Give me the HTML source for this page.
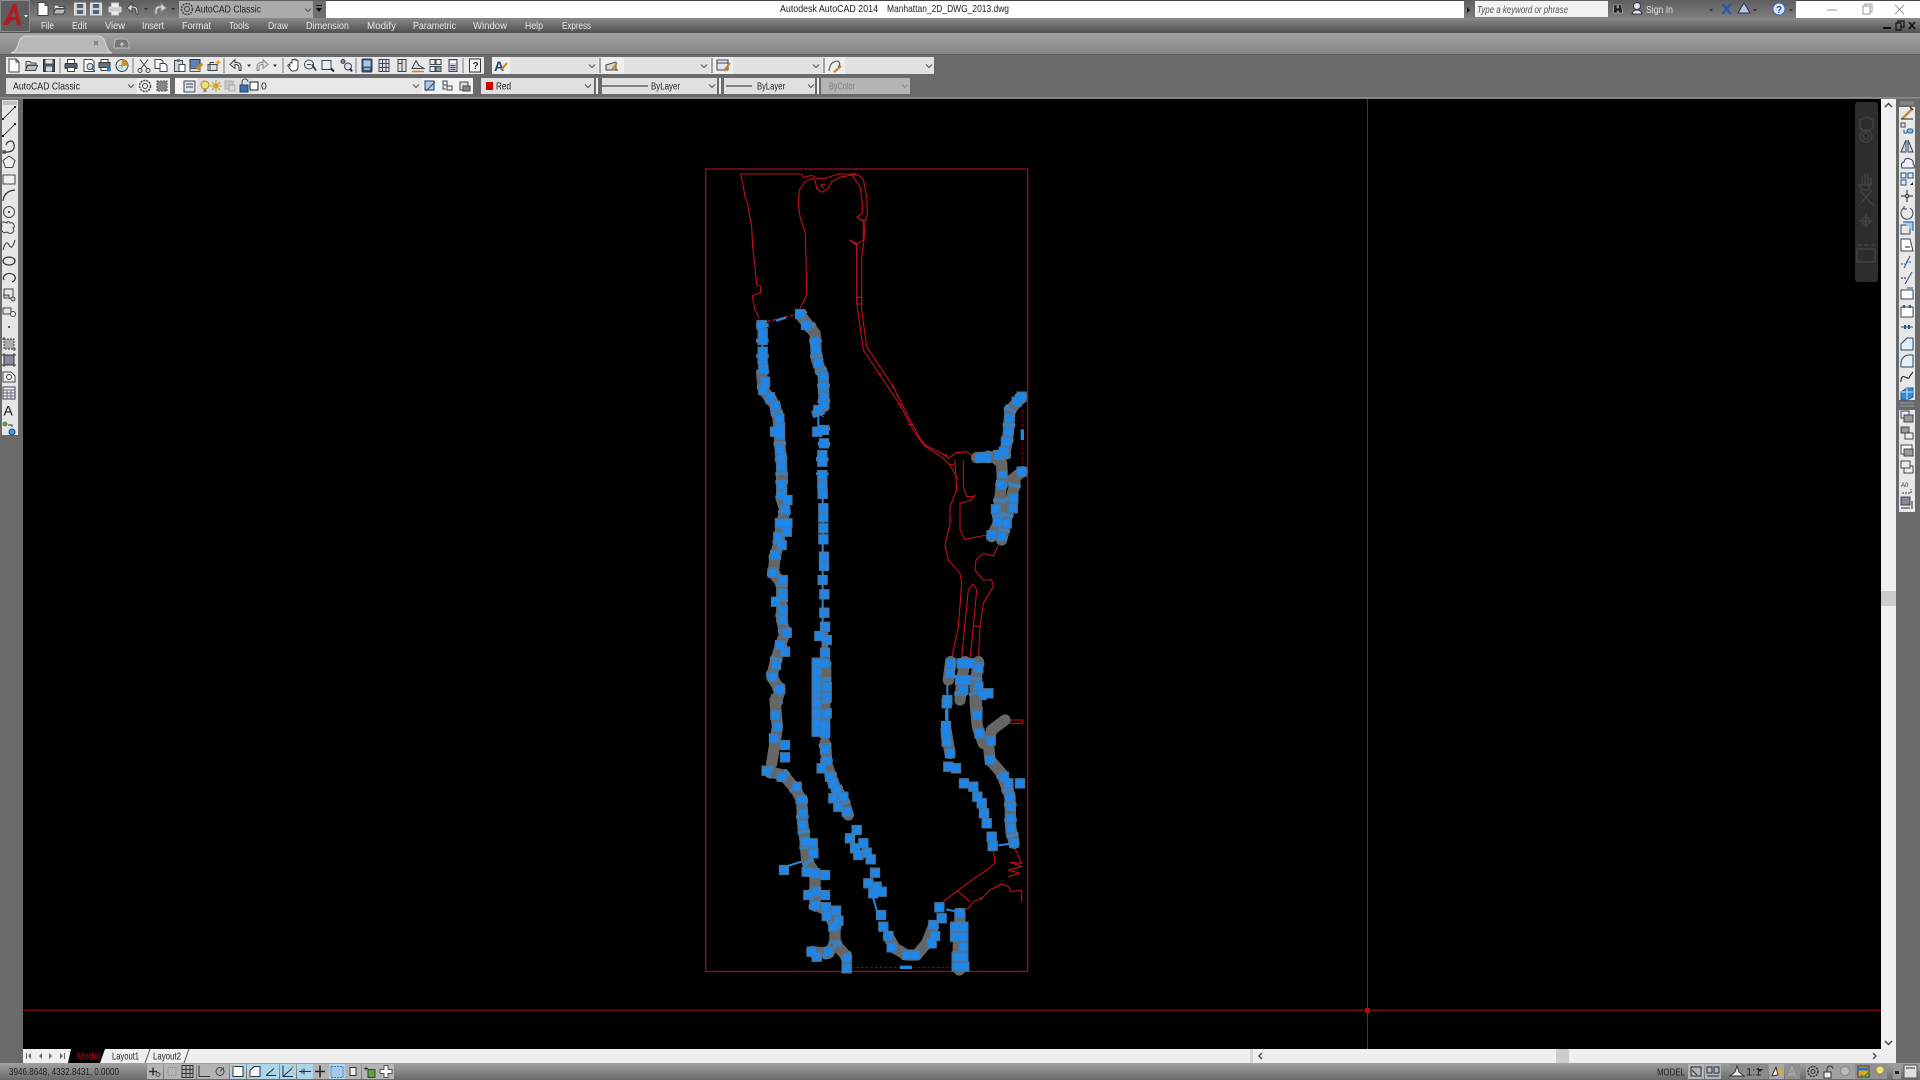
<!DOCTYPE html>
<html><head><meta charset="utf-8"><title>Autodesk AutoCAD 2014</title>
<style>
html,body{margin:0;padding:0;background:#000;width:1920px;height:1080px;overflow:hidden}
svg{display:block}
text{font-family:"Liberation Sans",sans-serif;font-size:10.5px}
.mn{fill:#e6e6e6}
.dk{fill:#222}
.g{fill:none;stroke:#666;stroke-width:34;stroke-linejoin:round;stroke-linecap:round}
.gw{fill:none;stroke:#666;stroke-width:52;stroke-linejoin:round}
.m{fill:none;stroke:#3f7fb8;stroke-width:38;stroke-dasharray:12 34}
.s{fill:none;stroke:#1e86e8;stroke-width:23;stroke-linecap:square}
.h{fill:none;stroke:#4a759c;stroke-width:31;stroke-linecap:square}
.t{fill:none;stroke:#2a86d8;stroke-width:6}
.r{fill:none;stroke:#c8101a;stroke-width:3.2;stroke-linejoin:round}
.ic{fill:none;stroke:#3c4650;stroke-width:1}
.ib{fill:#fff;stroke:#3c4650;stroke-width:1}
</style></head>
<body>
<svg width="1920" height="1080" viewBox="0 0 1920 1080" xmlns="http://www.w3.org/2000/svg">
<defs>
<linearGradient id="gMenu" x1="0" y1="0" x2="0" y2="1"><stop offset="0" stop-color="#8a8a8a"/><stop offset="1" stop-color="#4f4f4f"/></linearGradient>
<linearGradient id="gTab" x1="0" y1="0" x2="0" y2="1"><stop offset="0" stop-color="#a2a2a2"/><stop offset="1" stop-color="#868686"/></linearGradient>
<linearGradient id="gQat" x1="0" y1="0" x2="0" y2="1"><stop offset="0" stop-color="#5e5e5e"/><stop offset="1" stop-color="#7e7e7e"/></linearGradient>
<linearGradient id="gSt" x1="0" y1="0" x2="0" y2="1"><stop offset="0" stop-color="#a0a0a0"/><stop offset="1" stop-color="#6a6a6a"/></linearGradient>

<g id="new"><path class="ib" d="M-5-6.500h7l3 3v10h-10z"/><path class="ic" d="M2-6.500v3h3"/></g>
<g id="open"><path d="M-6-4h4l1 1.500h5v2h-8l-2 5.500z" fill="#ddd" stroke="#3c4650"/><path d="M-4.500 0h10l-2 5h-10z" fill="#bbb" stroke="#3c4650"/></g>
<g id="save"><path d="M-5.500-6h11v12h-11z" fill="#46525e" stroke="#2a3238"/><rect x="-3.500" y="-6" width="7" height="4" fill="#dfe5ea"/><rect x="-3" y="1" width="6" height="5" fill="#cfd6dc"/></g>
<g id="qsave"><path d="M-5.500-6h11v12h-11z" fill="#c9d0d8" stroke="#dfe5ea"/><rect x="-3" y="-5" width="6" height="4" fill="#56606a"/><rect x="-3" y="1" width="6" height="4" fill="#56606a"/></g>
<g id="qprint"><rect x="-3.500" y="-6" width="7" height="4" fill="#eee" stroke="#ccc"/><rect x="-6" y="-2" width="12" height="5" rx="1" fill="#c6ccd2" stroke="#e2e2e2"/><rect x="-3.500" y="2" width="7" height="4" fill="#eee" stroke="#ccc"/></g>
<g id="print"><rect x="-3.500" y="-6" width="7" height="4" fill="#fff" stroke="#3c4650"/><rect x="-6" y="-2" width="12" height="5" rx="1" fill="#56626e" stroke="#333"/><rect x="-3.500" y="2" width="7" height="4" fill="#fff" stroke="#3c4650"/></g>
<g id="prev"><path class="ib" d="M-5-6h8l2 2v10h-10z"/><circle cx="1" cy="1" r="3" fill="#cde" stroke="#3c4650"/><path class="ic" d="M3 3l3 3"/></g>
<g id="pub"><rect x="-4" y="-6" width="7" height="3" fill="#fff" stroke="#3c4650"/><rect x="-6" y="-3" width="11" height="5" fill="#66727e" stroke="#333"/><rect x="-4" y="2" width="7" height="3" fill="#fff" stroke="#3c4650"/><circle cx="4" cy="4" r="2" fill="#2a7ec8"/></g>
<g id="d3"><circle r="6" fill="#dfe7ee" stroke="#3c4650"/><path d="M0-6a6 6 0 0 1 6 6h-6z" fill="#d88a2a"/><path d="M-3 0h6M0-3v6" stroke="#3c7"/></g>
<g id="cut"><path class="ic" d="M-4-6l7 9M4-6l-7 9"/><circle cx="-4" cy="5" r="2" fill="none" stroke="#3c4650"/><circle cx="4" cy="5" r="2" fill="none" stroke="#3c4650"/></g>
<g id="copy"><path class="ib" d="M-6-6h6l2 2v7h-8z"/><path class="ib" d="M-1-2h5l2 2v6h-7z"/></g>
<g id="paste"><rect x="-5.500" y="-5" width="8" height="11" fill="#d2d2d2" stroke="#3c4650"/><rect x="-3" y="-6.500" width="3" height="3" fill="#68747e"/><path class="ib" d="M-1-1h6v7h-6z"/></g>
<g id="match"><rect x="-6" y="-6" width="10" height="9" fill="#5d7fb2" stroke="#333"/><path d="M-6 3h10v3h-10z" fill="#ddd" stroke="#555"/><path d="M6-2l-5 6" stroke="#c8851e" stroke-width="3"/></g>
<g id="blk"><rect x="-6" y="-1" width="9" height="6" fill="#ddd" stroke="#3c4650"/><path class="ic" d="M-4 5v-8h4"/><path d="M4-6l1 2 2 1-2 1-1 2-1-2-2-1 2-1z" fill="#e8a01c"/></g>
<g id="undo"><path d="M-6-1l5-5v3h2a4 4 0 0 1 4 4v4h-2v-3a3 3 0 0 0-3-3h-1v4z" fill="#ddd" stroke="#3c4650"/></g>
<g id="redo"><path d="M6-1l-5-5v3h-2a4 4 0 0 0-4 4v4h2v-3a3 3 0 0 1 3-3h1v4z" fill="#ddd" stroke="#8c8c8c"/></g>
<g id="pan"><path d="M-4 1v-3a1 1 0 0 1 2 0v-3a1 1 0 0 1 2 0v-0.500a1 1 0 0 1 2 0v1a1 1 0 0 1 2 0v6q0 4-4 4h-1q-2 0-3-2l-2-3q-0.500-1.500 1-1.500z" fill="#fff" stroke="#3c4650"/></g>
<g id="zm"><circle cx="-1" cy="-1" r="4.500" fill="#e4eef6" stroke="#3c4650"/><path d="M2-1l4 6" stroke="#3c4650" stroke-width="2"/><path d="M-3-1h4" stroke="#3c4650"/></g>
<g id="zw"><rect x="-6" y="-5" width="9" height="9" fill="#e4eef6" stroke="#3c4650"/><path d="M3 3l3 3" stroke="#222" stroke-width="2"/></g>
<g id="zp"><circle cx="2" cy="1" r="3.500" fill="#dde" stroke="#3c4650"/><circle cx="-3" cy="-4" r="2" fill="#889" stroke="#3c4650"/><path d="M4 3l2 3" stroke="#222" stroke-width="2"/></g>
<g id="props"><rect x="-5" y="-6.500" width="10" height="13" rx="1" fill="#3a5a82" stroke="#28384c"/><rect x="-3.500" y="-5" width="7" height="6" fill="#a8c8e6"/><path d="M-3 3.500h6" stroke="#fff"/></g>
<g id="grid"><rect x="-5" y="-6" width="10" height="12" fill="#dde" stroke="#3c4650"/><path class="ic" d="M-1.500-6v12M2-6v12M-5-2h10M-5 2h10"/></g>
<g id="tool"><rect x="-4" y="-6" width="8" height="12" fill="#ddd" stroke="#3c4650"/><path class="ic" d="M0-6v12M-4-2h4"/></g>
<g id="sheet"><path d="M-6 3l4-8 3 5 5 3h-12z" fill="#dde" stroke="#3c4650"/><path d="M-6 6h12" stroke="#c8851e" stroke-width="1.500"/></g>
<g id="mk"><rect x="-5" y="-6" width="5" height="5" fill="none" stroke="#3c4650"/><rect x="1" y="-6" width="5" height="5" fill="none" stroke="#3c4650"/><rect x="-5" y="1" width="5" height="5" fill="none" stroke="#3c4650"/><rect x="1" y="1" width="5" height="5" fill="#7a9" stroke="#3c4650"/></g>
<g id="calc"><rect x="-4" y="-6" width="8" height="12" fill="#ccd" stroke="#3c4650"/><rect x="-2.500" y="-4.500" width="5" height="2" fill="#fff"/><path class="ic" d="M-2.500 0h5M-2.500 2h5M-2.500 4h5"/></g>
<g id="help"><rect x="-5.500" y="-6.500" width="11" height="13" fill="#f4f4f4" stroke="#333"/><text x="-2.500" y="3.500" style="font-size:10px;font-weight:bold" fill="#333">?</text></g>
<g id="gear"><circle r="5.500" fill="none" stroke="#444" stroke-width="1.500" stroke-dasharray="2 1"/><circle r="2.500" fill="none" stroke="#444"/></g>
<path id="dd" d="M-3-1.500l3 3 3-3" fill="none" stroke="#555" stroke-width="1"/>
<path id="tri" d="M-2-1h4l-2 2.500z" fill="#333"/>

<g id="ln"><path d="M-6 6L6-6" stroke="#444"/><rect x="-7" y="5" width="2" height="2" fill="#222"/><rect x="5" y="-7" width="2" height="2" fill="#222"/></g>
<g id="pl"><path d="M-6 5Q0 0 6-5" stroke="#333" stroke-width="1.200" fill="none" stroke-dasharray="4 1"/><rect x="-1" y="-1" width="2" height="2" fill="#222"/></g>
<g id="poly"><path d="M-6 5C4 6 6 2 5-3S-2-6-3-2" fill="none" stroke="#333" stroke-width="1.200"/><path d="M-6 3v4M-4 3v4" stroke="#222"/></g>
<g id="pgon"><path d="M0-6l6 4.500-2.500 7h-7l-2.500-7z" fill="#eee" stroke="#445"/></g>
<g id="rect"><path d="M-6-4h12v9h-12z" fill="#eee" stroke="#445"/></g>
<g id="arc"><path d="M-6 6Q-5-4 6-5" fill="none" stroke="#333" stroke-width="1.200"/></g>
<g id="cir"><circle r="5.500" fill="none" stroke="#445"/><circle r="1" fill="#222"/></g>
<g id="rev"><path d="M-2-6q2-1 3 1 3-1 4 2 1 2-1 3 2 3-1 5-3 1-5-1-3 2-5-1t0-5q-2-3 1-4 2 0 4 1z" fill="none" stroke="#445"/></g>
<g id="spl"><path d="M-6 5Q-3-6 0 0T6-5" fill="none" stroke="#334"/></g>
<g id="ell"><ellipse rx="6" ry="4" fill="none" stroke="#334" stroke-width="1.200"/></g>
<g id="earc"><path d="M-5 2A6 4.500 0 1 1 3 4" fill="none" stroke="#334" stroke-width="1.200"/></g>
<g id="ins"><rect x="-5" y="-6" width="9" height="9" fill="none" stroke="#445"/><path d="M-6 0h6v4" fill="#bbb" stroke="#445"/><circle cx="4" cy="4" r="2" fill="#ccc" stroke="#445"/></g>
<g id="mk2"><rect x="-6" y="-3" width="8" height="6" fill="none" stroke="#445"/><circle cx="4" cy="3" r="2.500" fill="#eee" stroke="#445"/></g>
<g id="pt"><circle r="1" fill="#333"/></g>
<g id="hat"><rect x="-5" y="-5" width="10" height="10" fill="#aaa" stroke="#445" stroke-dasharray="2 1"/><path d="M-7-5h2M5 5h2M-5-7v2M5 5v2" stroke="#333"/></g>
<g id="grd"><rect x="-5" y="-5" width="10" height="10" fill="#889" stroke="#445"/><path d="M-7-5h14M-7 5h14M-5-7v14M5-7v14" stroke="#333"/></g>
<g id="reg"><path d="M-6-5h8l4 4v6h-12z" fill="#eee" stroke="#445"/><circle cx="0" cy="0" r="2.500" fill="none" stroke="#445"/></g>
<g id="tbl"><rect x="-6" y="-6" width="12" height="12" fill="#eee" stroke="#445"/><path d="M-6-3h12M-6 0h12M-6 3h12M-2-3v9M2-3v9" stroke="#667"/></g>
<g id="aT"><text x="-5.500" y="5.500" style="font-size:14px" fill="#111">A</text></g>
<g id="add"><circle cx="-4" cy="-4" r="2.500" fill="#5a9a3a"/><circle cx="3" cy="4" r="3" fill="#3a9ae0" stroke="#246"/><path d="M-1-3h4v2" fill="none" stroke="#333"/></g>

<g id="r1"><path d="M-5 6L5-4" stroke="#c98a2a" stroke-width="2.500"/><path d="M-6 6h12" stroke="#222"/><path d="M3-6l3 3" stroke="#333" stroke-width="1.500"/></g>
<g id="r2"><rect x="-6" y="-6" width="4" height="4" fill="none" stroke="#445"/><rect x="0" y="0" width="6" height="4" rx="2" fill="#7ec0f0" stroke="#258"/><path d="M-3 1v3h3" stroke="#258" fill="none"/></g>
<g id="r3"><path d="M-1-6L-6 6h5zM1-6L6 6h-5z" fill="#c6dcf0" stroke="#345"/></g>
<g id="r4"><path d="M-5 5q-2-5 2-6 1-5 6-3 4 1 3 5 2 1 1 4z" fill="#eef" stroke="#345"/></g>
<g id="r5"><rect x="-6" y="-6" width="5" height="5" fill="none" stroke="#258"/><rect x="1" y="-6" width="5" height="5" fill="none" stroke="#258"/><rect x="-6" y="1" width="5" height="5" fill="none" stroke="#258"/><path d="M3 6l3-3v3z" fill="#222"/></g>
<g id="r6"><path d="M-6 0h12M0-6v12" stroke="#222"/><circle r="1.500" fill="#fff" stroke="#222"/></g>
<g id="r7"><path d="M-3-4A6 6 0 1 0 3-4" fill="none" stroke="#345"/><path d="M-3-6v3h3" fill="none" stroke="#345"/></g>
<g id="r8"><rect x="-6" y="-3" width="9" height="9" fill="none" stroke="#345"/><path d="M-4-6h10v9" fill="#a8cdf0" stroke="#258"/></g>
<g id="r9"><path d="M-6-6h9l3 12h-12z" fill="#fff" stroke="#345"/><path d="M-2 2h5" stroke="#222"/></g>
<g id="r10"><path d="M-6 2h4M-1 0h6" stroke="#258" stroke-dasharray="2 1"/><path d="M3-6L-3 6" stroke="#258"/></g>
<g id="r11"><path d="M-6 0h6" stroke="#222" stroke-dasharray="2 1"/><path d="M5-6L-2 6" stroke="#258"/></g>
<g id="r12"><path d="M-6-4h12v9h-12z" fill="#fff" stroke="#345"/><path d="M0-6h6" stroke="#258"/></g>
<g id="r13"><path d="M-6-4h12v10h-12z" fill="#fff" stroke="#345"/><path d="M-3-6v3M3-6v3" stroke="#258" stroke-width="2"/></g>
<g id="r14"><path d="M-6 0h12" stroke="#258"/><path d="M-2-2v4M2-2v4" stroke="#258" stroke-width="2"/></g>
<g id="r15"><path d="M-6 6v-6l6-6h6v12z" fill="#e2eef8" stroke="#345"/></g>
<g id="r16"><path d="M-6 6V2a8 8 0 0 1 8-8h4v12z" fill="#e2eef8" stroke="#345"/></g>
<g id="r17"><path d="M-6 5q0-7 4-5t4 1 4-6" fill="none" stroke="#234" stroke-width="1.200"/></g>
<g id="r18"><path d="M-6-1l6-4h6v9l-6 3h-6z" fill="#3a8ad0" stroke="#1a5a9a"/><path d="M0-5v12M-6-1h12" stroke="#cde"/></g>
<g id="r19"><rect x="-6" y="-6" width="8" height="7" fill="#eee" stroke="#445"/><rect x="-3" y="-2" width="9" height="7" fill="#999" stroke="#445"/></g>
<g id="r20"><rect x="-6" y="-6" width="8" height="6" fill="#999" stroke="#445"/><rect x="-2" y="0" width="8" height="6" fill="#eee" stroke="#445"/></g>
<g id="r21"><rect x="-6" y="-5" width="11" height="9" fill="#fff" stroke="#445"/><rect x="-3" y="-1" width="9" height="7" fill="#999" stroke="#445"/></g>
<g id="r22"><rect x="-3" y="-1" width="9" height="7" fill="#eee" stroke="#445"/><rect x="-6" y="-6" width="9" height="7" fill="#eee" stroke="#445"/></g>
<g id="r23"><text x="-6" y="-1" style="font-size:6px" fill="#333">A0</text><path d="M-5 5h9v-4" fill="none" stroke="#333" stroke-dasharray="2 1"/></g>
<g id="r24"><rect x="-6" y="-6" width="9" height="8" fill="#889" stroke="#445"/><path d="M-6 5h9M5-2v8" stroke="#333"/></g>

<path id="sq6" d="M185 495h.1M188 520h.1M188 540h.1M188 575h.1M188 598h.1M190 628h.1M195 665h.1M190 690h.1M210 712h.1M225 738h.1M238 775h.1M240 802h.1M225 815h.1M240 825h.1M240 868h.1M245 895h.1M245 920h.1M248 950h.1M300 462h.1M318 495h.1M345 545h.1M347 570h.1M355 610h.1M370 650h.1M370 680h.1M372 710h.1M372 735h.1M355 750h.1M372 810h.1M352 815h.1M372 850h.1M367 885h.1M367 905h.1M367 945h.1M965 710h.1M950 725h.1M928 775h.1M925 815h.1M918 845h.1M912 875h.1M895 885h.1M860 893h.1M840 893h.1M907 948h.1M965 935h.1"/>
<path id="sq7" d="M245 18h.1M245 45h.1M262 60h.1M255 88h.1M240 130h.1M262 130h.1M260 155h.1M235 170h.1M245 195h.1M225 225h.1M218 278h.1M248 300h.1M248 340h.1M228 365h.1M248 390h.1M248 420h.1M260 458h.1M240 495h.1M255 515h.1M228 555h.1M218 590h.1M240 628h.1M228 658h.1M367 15h.1M368 42h.1M370 85h.1M370 112h.1M370 145h.1M370 178h.1M372 230h.1M372 258h.1M368 300h.1M373 343h.1M373 398h.1M375 440h.1M358 468h.1M380 480h.1M375 518h.1M350 548h.1M375 550h.1M350 575h.1M350 600h.1M350 625h.1M380 620h.1M350 650h.1M380 650h.1M752 550h.1M750 580h.1M742 660h.1M785 550h.1M808 550h.1M835 565h.1M780 600h.1M800 600h.1M790 630h.1M835 620h.1M845 645h.1M865 640h.1M830 675h.1M830 708h.1M903 15h.1M888 88h.1M893 125h.1M875 165h.1M940 55h.1M938 85h.1M920 130h.1M905 170h.1"/>
<path id="sq8" d="M226 45h.1M232 80h.1M222 115h.1M255 135h.1M255 172h.1M200 212h.1M245 230h.1M290 260h.1M305 300h.1M308 338h.1M308 375h.1M338 430h.1M315 425h.1M340 460h.1M252 510h.1M375 525h.1M345 520h.1M320 515h.1M348 575h.1M325 585h.1M375 585h.1M345 615h.1M378 622h.1M408 632h.1M380 648h.1M415 662h.1M400 680h.1M335 755h.1M385 755h.1M350 770h.1M440 775h.1M440 805h.1M350 10h.1M350 40h.1M380 40h.1M350 70h.1M375 75h.1M350 95h.1M375 100h.1M375 148h.1M380 182h.1M365 205h.1M390 230h.1M400 250h.1M410 270h.1M400 295h.1M430 290h.1M415 320h.1M440 335h.1M470 390h.1M450 415h.1M490 430h.1M465 445h.1M500 458h.1M475 465h.1M512 478h.1M525 518h.1M505 550h.1M545 575h.1M520 580h.1M530 560h.1M543 645h.1M550 680h.1M565 708h.1M575 742h.1M620 765h.1M645 765h.1M695 730h.1M705 708h.1M700 675h.1M725 655h.1M718 622h.1M740 10h.1M738 78h.1M738 100h.1M740 125h.1M750 160h.1M768 205h.1M745 200h.1M792 250h.1M820 260h.1M832 290h.1M845 310h.1M852 340h.1M860 370h.1M875 410h.1M878 438h.1M838 100h.1M872 122h.1M870 180h.1M912 230h.1M960 250h.1M925 250h.1M930 290h.1M932 320h.1M932 355h.1M932 385h.1M942 428h.1M780 640h.1M765 680h.1M790 680h.1M765 710h.1M790 710h.1M790 740h.1M770 770h.1M790 770h.1M770 800h.1M793 800h.1M832 45h.1"/>
</defs>

<!-- frame backgrounds -->
<rect width="1920" height="1080" fill="#6a6a6a"/>
<rect width="1920" height="18" fill="#fff"/>
<rect width="1920" height="1" fill="#444"/>
<rect x="30" y="0" width="296" height="18" fill="url(#gQat)"/>
<rect x="1464" y="0" width="332" height="18" fill="url(#gQat)"/>
<rect x="1475" y="1" width="133" height="16" fill="#f2f2f2"/>
<rect x="0" y="18" width="1920" height="15" fill="url(#gMenu)"/>
<rect x="0" y="33" width="1920" height="21" fill="url(#gTab)"/>
<rect x="0" y="54" width="1920" height="1" fill="#5a5a5a"/>
<rect x="0" y="97" width="1920" height="1.500" fill="#8d8d8d"/>

<!-- app button -->
<rect x="0" y="0" width="30" height="32" fill="#5e5e5e"/>
<rect x="0.500" y="0.500" width="29" height="31" fill="none" stroke="#8a8a8a"/>
<path d="M3 25L13 4h3l5 21h-4l-1-5h-4l-4 5z" fill="#b31b20"/>
<path d="M11 17l3-6 2 6z" fill="#5e5e5e"/>
<path d="M24 15h4l-2 2.500z" fill="#eee"/>

<!-- QAT -->
<g transform="translate(0,9)">
<use href="#new" x="43"/><use href="#open" x="60"/><use href="#qsave" x="80"/><use href="#qsave" x="96"/><use href="#qprint" x="115"/><use href="#undo" x="133"/><use href="#tri" x="146" /><use href="#redo" x="160"/><use href="#tri" x="173"/>
</g>
<rect x="179" y="1" width="134" height="17" fill="#ababab"/>
<use href="#gear" x="187" y="9"/>
<text x="195" y="12.500" class="dk" textLength="66" lengthAdjust="spacingAndGlyphs">AutoCAD Classic</text>
<use href="#dd" x="308" y="10"/>
<rect x="314" y="1" width="12" height="17" fill="#6f6f6f"/>
<path d="M316 5h6v1h-6zM316 8h6l-3 4z" fill="#111"/>

<!-- title -->
<text x="780" y="12" fill="#222" textLength="98" lengthAdjust="spacingAndGlyphs">Autodesk AutoCAD 2014</text>
<text x="887" y="12" fill="#222" textLength="122" lengthAdjust="spacingAndGlyphs">Manhattan_2D_DWG_2013.dwg</text>

<!-- info center -->
<path d="M1467 7l3 3-3 3z" fill="#111"/>
<text x="1477" y="13" fill="#555" font-style="italic" textLength="91" lengthAdjust="spacingAndGlyphs">Type a keyword or phrase</text>
<path d="M1614 5a2 2 0 0 1 3 0v3h1.500v-3a2 2 0 0 1 3 0l1 8h-4v-2h-1v2h-4z" fill="#222" stroke="#ddd" stroke-width=".5"/>
<path d="M1637 2.500a3 3 0 0 1 0 7a3 3 0 0 1 0-7zM1632 14q1-4 5-4t5 4z" fill="#e2e8ee" stroke="#334"/>
<text x="1646" y="13" fill="#e0e0e0" textLength="27" lengthAdjust="spacingAndGlyphs">Sign In</text>
<use href="#tri" x="1711" y="10"/>
<path d="M1721 4l4 5-4 5h3l2.500-3 2.500 3h3l-4-5 4-5h-3l-2.500 3-2.500-3z" fill="#2a58b0"/>
<path d="M1744 3l6 10h-12z" fill="#b8c8e8" stroke="#334"/><use href="#tri" x="1755" y="10"/>
<circle cx="1779" cy="9" r="6" fill="#dce8f6" stroke="#3468b0"/><text x="1776" y="13" style="font-size:10px;font-weight:bold" fill="#2050a0">?</text><use href="#tri" x="1791" y="10"/>

<!-- window controls -->
<path d="M1827 10h10" stroke="#999"/>
<path d="M1863 6h7v8h-7zM1865 6V4h7v8h-2" fill="none" stroke="#999"/>
<path d="M1895 5l9 9M1904 5l-9 9" stroke="#999"/>
<path d="M1883 28h8" stroke="#111" stroke-width="2"/>
<path d="M1896 23h5v7h-5zM1898 23v-2h6v6h-3" fill="none" stroke="#111" stroke-width="1.200"/>
<path d="M1909 22l6 7M1915 22l-6 7" stroke="#111" stroke-width="1.600"/>

<!-- menu -->
<text class="mn" x="41" y="29" textLength="13" lengthAdjust="spacingAndGlyphs">File</text>
<text class="mn" x="72" y="29" textLength="15" lengthAdjust="spacingAndGlyphs">Edit</text>
<text class="mn" x="105" y="29" textLength="20" lengthAdjust="spacingAndGlyphs">View</text>
<text class="mn" x="142" y="29" textLength="22" lengthAdjust="spacingAndGlyphs">Insert</text>
<text class="mn" x="182" y="29" textLength="29" lengthAdjust="spacingAndGlyphs">Format</text>
<text class="mn" x="229" y="29" textLength="20" lengthAdjust="spacingAndGlyphs">Tools</text>
<text class="mn" x="268" y="29" textLength="20" lengthAdjust="spacingAndGlyphs">Draw</text>
<text class="mn" x="306" y="29" textLength="43" lengthAdjust="spacingAndGlyphs">Dimension</text>
<text class="mn" x="367" y="29" textLength="29" lengthAdjust="spacingAndGlyphs">Modify</text>
<text class="mn" x="413" y="29" textLength="43" lengthAdjust="spacingAndGlyphs">Parametric</text>
<text class="mn" x="473" y="29" textLength="34" lengthAdjust="spacingAndGlyphs">Window</text>
<text class="mn" x="525" y="29" textLength="18" lengthAdjust="spacingAndGlyphs">Help</text>
<text class="mn" x="562" y="29" textLength="29" lengthAdjust="spacingAndGlyphs">Express</text>

<!-- file tab -->
<path d="M11 53q5-1 7-8 2-9 8-9h72q6 0 8 9 2 7 6 8z" fill="#b8b8b8" stroke="#d8d8d8"/>
<path d="M94 41l4 4M98 41l-4 4" stroke="#7a7a7a" stroke-width="1.500"/>
<path d="M114 48l1-7q0-2 3-2h8l3 4v5z" fill="#777" stroke="#bbb"/>
<path d="M122 47v-4M120 45l2-2 2 2" stroke="#ccc" fill="none"/>

<!-- toolbars row 1 -->
<rect x="6" y="57" width="478" height="17" fill="#e9e9e9"/>
<rect x="492" y="57" width="442" height="17" fill="#e2e2e2"/>
<rect x="492" y="57" width="18" height="17" fill="#eee"/>
<g stroke="#777"><path d="M60 58v15M133 58v15M224 58v15M283 58v15M356 58v15M463 58v15"/></g>
<g transform="translate(0,65.500)">
<use href="#new" x="14"/><use href="#open" x="32"/><use href="#save" x="49"/><use href="#print" x="71"/><use href="#prev" x="89"/><use href="#pub" x="105"/><use href="#d3" x="122"/>
<use href="#cut" x="144"/><use href="#copy" x="161"/><use href="#paste" x="180"/><use href="#match" x="196"/><use href="#blk" x="214"/>
<use href="#undo" x="236"/><use href="#tri" x="249"/><use href="#redo" x="262"/><use href="#tri" x="275"/>
<use href="#pan" x="294"/><use href="#zm" x="310"/><use href="#zw" x="328"/><use href="#zp" x="346"/>
<use href="#props" x="367"/><use href="#grid" x="384"/><use href="#tool" x="402"/><use href="#sheet" x="418"/><use href="#mk" x="435"/><use href="#calc" x="453"/><use href="#help" x="475"/>
</g>
<text x="494" y="71" style="font-size:14px;font-weight:bold" fill="#23407a">A</text><path d="M501 70l6-7" stroke="#c8851e" stroke-width="2"/>
<g fill="#eee"><rect x="598" y="57" width="26" height="17"/><rect x="710" y="57" width="23" height="17"/><rect x="822" y="57" width="23" height="17"/></g>
<g stroke="#555"><path d="M600 58v15M712 58v15M824 58v15"/></g>
<path d="M606 70v-5l10-3v8zM606 70h12" fill="#d8d8d8" stroke="#444"/><path d="M617 63l-5 7" stroke="#c8851e" stroke-width="2"/>
<rect x="717" y="60" width="11" height="10" fill="#dfe6f0" stroke="#445"/><path d="M717 63h11" stroke="#445"/><path d="M730 63l-6 8" stroke="#c8851e" stroke-width="2"/>
<path d="M829 71q1-8 5-9 3-2 5 0 2 3-1 5" fill="none" stroke="#445"/><path d="M841 66l-7 6" stroke="#c8851e" stroke-width="2"/>
<use href="#dd" x="592" y="66"/><use href="#dd" x="704" y="66"/><use href="#dd" x="816" y="66"/><use href="#dd" x="929" y="66"/>

<!-- toolbars row 2 -->
<rect x="6" y="78" width="131" height="16" fill="#e0e0e0"/>
<rect x="137" y="78" width="33" height="16" fill="#efefef"/>
<text x="13" y="89.500" class="dk" textLength="67" lengthAdjust="spacingAndGlyphs">AutoCAD Classic</text>
<use href="#dd" x="131" y="86"/>
<use href="#gear" x="145" y="86"/>
<rect x="157" y="81" width="10" height="10" fill="#888" stroke="#555" stroke-dasharray="2 1"/>
<rect x="175" y="78" width="298" height="16" fill="#e8e8e8"/>
<rect x="175" y="78" width="22" height="16" fill="#f4f4f4"/>
<rect x="197" y="78" width="56" height="16" fill="#e0e0e0"/>
<rect x="422" y="78" width="51" height="16" fill="#f2f2f2"/>
<g transform="translate(0,86)">
<rect x="184" y="-5" width="11" height="11" fill="#dde4ea" stroke="#445"/><path d="M186-2h7M186 1h7" stroke="#445"/>
<circle cx="205" cy="-1" r="4" fill="#f2dc7a" stroke="#a89030"/><rect x="203.500" y="3" width="3" height="3" fill="#888"/>
<circle cx="216" cy="0" r="2.500" fill="#e8b830"/><path d="M216-6v12M210 0h12M212-4l8 8M220-4l-8 8" stroke="#c8a020"/>
<rect x="225" y="-5" width="8" height="8" fill="#c8c8c8" stroke="#aaa"/><rect x="229" y="-1" width="6" height="6" fill="#d8d8d8" stroke="#aaa"/>
<rect x="240" y="-1" width="8" height="7" fill="#3a70b8" stroke="#246"/><path d="M242-1v-3a3 3 0 0 1 6 0" fill="none" stroke="#445"/>
<rect x="250" y="-4" width="8" height="8" fill="#fff" stroke="#222"/>
</g>
<text x="261" y="89.500" class="dk">0</text>
<use href="#dd" x="416" y="86"/>
<g transform="translate(0,86)"><rect x="425" y="-5" width="9" height="9" fill="#aaccec" stroke="#246"/><path d="M426 5l9-9" stroke="#444"/><path d="M443-5h4v4h-4zM447 0h5v4h-5zM443 0v3h3" fill="none" stroke="#445"/><rect x="460" y="-4" width="8" height="8" fill="#ddd" stroke="#445"/><rect x="463" y="0" width="7" height="5" fill="#888" stroke="#445"/></g>

<rect x="481" y="78" width="113" height="16" fill="#e0e0e0"/>
<rect x="486" y="82" width="7" height="8" fill="#c00"/>
<text x="496" y="89.500" class="dk" textLength="15" lengthAdjust="spacingAndGlyphs">Red</text>
<use href="#dd" x="588" y="86"/>
<rect x="602" y="78" width="115" height="16" fill="#e0e0e0"/>
<path d="M602 86h46" stroke="#222"/>
<text x="651" y="89.500" class="dk" textLength="29" lengthAdjust="spacingAndGlyphs">ByLayer</text>
<use href="#dd" x="712" y="86"/>
<rect x="596" y="78" width="2" height="16" fill="#eee"/>
<rect x="719" y="78" width="2" height="16" fill="#eee"/>
<rect x="724" y="78" width="91" height="16" fill="#e0e0e0"/>
<path d="M726 86h26" stroke="#222"/>
<text x="757" y="89.500" class="dk" textLength="28" lengthAdjust="spacingAndGlyphs">ByLayer</text>
<use href="#dd" x="811" y="86"/>
<rect x="817" y="78" width="2" height="16" fill="#eee"/>
<rect x="821" y="78" width="89" height="16" fill="#b4b4b4"/>
<text x="829" y="89.500" fill="#808080" textLength="26" lengthAdjust="spacingAndGlyphs">ByColor</text>
<use href="#dd" x="905" y="86" opacity=".4"/>

<!-- canvas -->
<rect x="23" y="99" width="1858" height="950" fill="#000"/>

<!-- left draw toolbar -->
<rect x="2" y="100" width="16" height="335" fill="#e6e6e6"/>
<path d="M3 102h14M3 104h14" stroke="#999"/>
<g transform="translate(9,0)">
<use href="#ln" y="113"/><use href="#ln" y="130"/><use href="#poly" y="147"/><use href="#pgon" y="162"/><use href="#rect" y="179"/><use href="#arc" y="195"/><use href="#cir" y="212"/><use href="#rev" y="228"/><use href="#spl" y="245"/><use href="#ell" y="261"/><use href="#earc" y="278"/><use href="#ins" y="295"/><use href="#mk2" y="311"/><use href="#pt" y="327"/><use href="#hat" y="344"/><use href="#grd" y="360"/><use href="#reg" y="377"/><use href="#tbl" y="393"/><use href="#aT" y="410"/><use href="#add" y="428"/>
</g>

<!-- vertical scrollbar -->
<rect x="1881" y="99" width="15" height="964" fill="#f0f0f0"/>
<rect x="1881" y="591" width="15" height="15" fill="#cdcdcd"/>
<path d="M1885 107l3.500-3.500 3.500 3.500" fill="none" stroke="#444" stroke-width="1.500"/>
<path d="M1885 1041l3.500 3.500 3.500-3.500" fill="none" stroke="#444" stroke-width="1.500"/>

<!-- right modify toolbar -->
<rect x="1899" y="107" width="16" height="293" fill="#e8e8e8"/>
<rect x="1899" y="410" width="16" height="102" fill="#e8e8e8"/>
<path d="M1900 102h14M1900 104h14M1900 403h14M1900 406h14" stroke="#999"/>
<g transform="translate(1907,0)">
<use href="#r1" y="113"/><use href="#r2" y="129"/><use href="#r3" y="146"/><use href="#r4" y="163"/><use href="#r5" y="179"/><use href="#r6" y="196"/><use href="#r7" y="212"/><use href="#r8" y="228"/><use href="#r9" y="245"/><use href="#r10" y="262"/><use href="#r11" y="278"/><use href="#r12" y="294"/><use href="#r13" y="311"/><use href="#r14" y="327"/><use href="#r15" y="344"/><use href="#r16" y="361"/><use href="#r17" y="377"/><use href="#r18" y="393"/>
<use href="#r19" y="417"/><use href="#r20" y="433"/><use href="#r21" y="450"/><use href="#r22" y="467"/><use href="#r23" y="488"/><use href="#r24" y="503"/>
</g>

<!-- nav bar -->
<rect x="1855" y="102" width="23" height="180" rx="3" fill="#2d2d2d"/>
<g fill="none" stroke="#414141" stroke-width="1.500">
<path d="M1860 120l6-3 7 3v8l-7 4-6-4z"/>
<circle cx="1866" cy="136" r="6"/><circle cx="1866" cy="136" r="3"/>
<path d="M1862 186v-10m3 9v-12m3 12v-11m3 11v-8q0 13-5 13t-7-5z"/>
<path d="M1860 190l10 12M1872 190l-11 13M1870 202l5 4"/>
<path d="M1866 214v14M1859 221h14"/><circle cx="1866" cy="221" r="4"/>
<rect x="1857" y="249" width="18" height="13"/><path d="M1857 245h5M1864 245h5M1871 245h4"/>
</g>

<!-- Manhattan frame and drawing -->
<rect x="705.700" y="169" width="322" height="802.500" fill="none" stroke="#96121a" stroke-width="1.300"/>
<path d="M23 1010.300H1881" stroke="#9c1015" stroke-width="1"/>
<path d="M1367.500 99V1049" stroke="#a50f14" stroke-width="1"/>
<rect x="1365" y="1008" width="5" height="5" fill="#a50f14"/>

<!-- zoom 6 space -->
<g transform="translate(700,160) scale(.33333)">
<path class="r" d="M305,42L122,42L130,80L135,110L143,130L150,175L155,200L158,260L165,320L170,375L182,378L182,398L157,407L165,450L178,475"/>
<path class="r" d="M300,445L318,410L320,390L318,300L316,220L300,170L295,130L298,90L315,65L335,55L345,60L350,85L365,97L385,85L395,65L420,52L455,45L475,45L490,58L500,110L502,165L495,185L492,240L485,290L485,410L485,450L500,560L540,620L580,680L625,770L660,835L675,855L725,880L740,890"/>
<path class="r" d="M305,42L310,52L335,46L350,55L375,55L415,42L470,42M375,72L362,75L372,85"/>
<path class="r" d="M455,45L480,80L487,130L487,160L470,172L487,182L490,182L490,240L468,254L448,240L470,250L470,290L470,410L472,440L490,570L540,645L600,735L640,810L670,855L730,895L750,915L775,960"/>
<path class="r" d="M470,412H485V432H470ZM478,180H495M735,880L745,895L770,878L800,875L820,890M745,915L765,912M535,645L545,640M575,678L582,685M590,705L598,710M592,732L605,735M625,793L640,795M672,855L680,860"/>
<path class="r" style="stroke-width:4" d="M200,485L290,463" stroke-dasharray="12 6"/>
<path d="M228,482L258,473" stroke="#2a86d8" stroke-width="7"/>
<path class="r" style="stroke-width:2" d="M967,750V920" stroke-dasharray="7 7"/>
<rect x="962" y="808" width="10" height="32" fill="#2a86d8"/>
<path class="t" d="M187,480V640M355,760V810"/>
<path class="g" d="M185,640L190,690L225,735L235,780L240,860L245,920L245,960"/>
<path class="g" d="M305,470L345,520L350,600L370,650L372,740"/>
<path class="g" d="M965,712L930,750L925,820L915,880L880,890L830,893M880,890L905,910L907,960M967,935L935,960"/>
<path class="m" d="M187,490L187,560L188,620L190,690L225,735L235,780L240,860L245,920L245,960"/>
<path class="m" d="M300,460L345,520L350,600L370,650L372,740L355,760L372,810L372,850L367,900L367,945"/>
<path class="m" d="M965,710L930,750L925,820L915,880L880,890L830,893"/>
<use href="#sq6" class="h"/><use href="#sq6" class="s"/>
</g>

<!-- zoom 7 space -->
<g transform="translate(700,480) scale(.33333)">
<path class="r" d="M765,-60L770,30L750,80L750,130L735,195L745,240L780,280L785,310L775,440L755,535"/>
<path class="r" d="M790,-60L790,20L800,50L820,50L825,45L815,60L780,70L780,150L795,178L860,165"/>
<path class="r" d="M895,195L880,228L850,220L828,240L825,270L850,300L875,300L880,320L850,370L840,440L835,540"/>
<path class="r" d="M810,535L820,440L830,330L818,312L805,330L795,430L785,535M820,438L840,440M745,120H755"/>
<path class="r" d="M930,720H968V730H930"/>
<path class="t" d="M368,0V540M742,600V730"/>
<rect x="735" y="688" width="10" height="34" fill="#2a86d8"/>
<path class="g" d="M245,0L245,60L255,90L245,130L235,195L225,230L220,280L245,310L245,360L245,420L255,460L240,500L225,550L215,590L240,630L228,670"/>
<path class="g" style="stroke-width:20" d="M375,440L375,520"/>
<path class="gw" d="M368,545V670"/>
<path class="g" d="M752,545L745,600M795,545L785,600L780,660M835,545L825,620L830,700M905,10L895,90L895,130L875,170M945,10L925,90L905,180"/>
<path class="m" d="M245,0L245,60L255,90L245,130L235,195L225,230L220,280L245,310L245,360L245,420L255,460L240,500L225,550L215,590L240,630L228,670"/>
<path class="m" style="stroke-width:52" d="M368,545V670"/>
<path class="m" d="M795,545L785,600L780,660M835,545L825,620L830,700M905,10L895,90L895,130M945,10L925,90L905,180"/>
<use href="#sq7" class="h"/><use href="#sq7" class="s"/>
</g>

<!-- zoom 8 space -->
<g transform="translate(700,700) scale(.33333)">
<path class="r" d="M880,450L885,490L860,510L795,555L730,605M770,570L810,605M795,555L800,550"/>
<path class="r" d="M820,605L845,595L870,570L905,552L925,560L935,575L965,570L965,605M820,605L805,625L790,630M840,592L845,600"/>
<path class="r" d="M945,445L965,490L930,487L965,500L925,510L960,520L925,530"/>
<path class="r" style="stroke-width:2" d="M455,802H600M640,802H760" stroke-dasharray="8 6"/>
<rect x="600" y="797" width="36" height="10" fill="#2a86d8"/>
<path class="t" d="M240,505L320,480M738,628L775,635M895,436L940,430M520,595L530,630M740,30V50M375,100V140"/>
<path class="g" d="M225,0L232,80L225,130L215,190M205,215L250,225L285,265L305,300L308,370L315,420L320,480L345,520L345,575L345,615L380,630L405,680L405,730L385,760L335,755M405,730L440,770"/>
<path class="g" d="M375,130L378,150L380,190L400,250L430,300L445,345"/>
<path class="gw" d="M365,0V105"/>
<path class="g" d="M565,710L585,745L620,765L650,765L680,730L700,680"/>
<path class="g" d="M738,90L750,160M825,0L832,80L850,130M915,60L875,90L865,130L870,180L905,220L930,290L932,380L942,430"/>
<path class="g" d="M780,640L778,700L778,810"/>
<path class="gw" style="stroke-width:40" d="M778,670V810"/>
<path class="m" d="M205,215L250,225L285,265L305,300L308,370L315,420L320,480L345,520L345,575L345,615L380,630L405,680L405,730L385,760L335,755M405,730L440,770"/>
<path class="m" d="M375,130L380,190L400,250L430,300L445,345"/>
<path class="m" style="stroke-width:52" d="M365,0V105"/>
<path class="m" d="M905,220L930,290L932,380L942,430"/>
<use href="#sq8" class="h"/><use href="#sq8" class="s"/>
</g>

<!-- layout tabs -->
<rect x="23" y="1049" width="1873" height="14" fill="#efefef"/>
<path d="M68 1063l3-14h34l-5 14z" fill="#000"/>
<g fill="#666"><path d="M31 1053v6l-3-3zM42 1053v6l-3-3zM49 1053v6l3-3zM60 1053v6l3-3z"/><rect x="26" y="1053" width="1" height="6"/><rect x="64" y="1053" width="1" height="6"/></g>
<text x="77" y="1059.500" fill="#b4131a" textLength="23" lengthAdjust="spacingAndGlyphs">Model</text>
<text x="112" y="1059.500" class="dk" textLength="27" lengthAdjust="spacingAndGlyphs">Layout1</text>
<path d="M145 1063l5-14M189 1049l-5 14" stroke="#555" fill="none"/>
<text x="153" y="1059.500" class="dk" textLength="28" lengthAdjust="spacingAndGlyphs">Layout2</text>
<rect x="1250" y="1049" width="3" height="14" fill="#d6d6d6"/>
<rect x="1556" y="1049" width="13" height="14" fill="#cdcdcd"/>
<path d="M1262 1053l-3 3 3 3M1873 1053l3 3-3 3" fill="none" stroke="#444" stroke-width="1.300"/>

<!-- status bar -->
<rect x="0" y="1063" width="1920" height="17" fill="url(#gSt)"/>
<text x="9" y="1075" fill="#222" textLength="110" lengthAdjust="spacingAndGlyphs">3946.8648, 4332.8431, 0.0000</text>
<g fill="#b4b4b4">
<rect x="147" y="1064" width="16" height="15"/><rect x="164" y="1064" width="16" height="15"/><rect x="180" y="1064" width="16" height="15"/><rect x="197" y="1064" width="16" height="15"/><rect x="213" y="1064" width="16" height="15"/><rect x="313" y="1064" width="16" height="15"/><rect x="345" y="1064" width="16" height="15"/><rect x="362" y="1064" width="16" height="15"/><rect x="378" y="1064" width="16" height="15"/>
</g>
<g fill="#acd6e8">
<rect x="230" y="1064" width="16" height="15"/><rect x="247" y="1064" width="16" height="15"/><rect x="263" y="1064" width="16" height="15"/><rect x="280" y="1064" width="16" height="15"/><rect x="297" y="1064" width="16" height="15"/><rect x="329" y="1064" width="16" height="15"/>
</g>
<g transform="translate(0,1071.500)">
<path d="M149 0h8M153-4v8" stroke="#333" stroke-width="1.500"/><circle cx="158" cy="3" r="2" fill="none" stroke="#555"/>
<rect x="168" y="-4" width="8" height="8" fill="none" stroke="#888" stroke-dasharray="1 1"/>
<path d="M182-6h11v12h-11zM182-2h11M182 2h11M186-6v12M190-6v12" fill="none" stroke="#333"/>
<path d="M199-6v11h11" fill="none" stroke="#333"/>
<circle cx="220" cy="0" r="4" fill="none" stroke="#444"/><path d="M220 0l4-4" stroke="#444"/>
<rect x="233" y="-5" width="10" height="10" fill="#fff" stroke="#333"/><circle cx="233" cy="-5" r="1.500" fill="#e08030"/>
<path d="M250 5v-6l4-4h6v10z" fill="#f2f6f8" stroke="#333"/><circle cx="250" cy="5" r="1.500" fill="#e08030"/>
<path d="M266 4h10M266 4l8-7" fill="none" stroke="#234"/>
<path d="M283-6v11h10M283 5l9-8" fill="none" stroke="#234"/><path d="M291-4l2-2 1 1-2 2z" fill="#d8881c"/>
<path d="M299 0h12M304-3v6M302-2v4" stroke="#234"/>
<path d="M320-6v12M315 0h10" stroke="#222" stroke-width="1.500"/>
<rect x="331" y="-5" width="12" height="11" fill="#a8c8e8" stroke="#4878b0" stroke-dasharray="2 1"/>
<rect x="350" y="-4" width="6" height="8" fill="#eee" stroke="#333"/>
<path d="M364-3h4M366-5v4" stroke="#333"/><rect x="368" y="-2" width="7" height="8" fill="#60a040" stroke="#343"/>
<path d="M384-6h4v4h4v4h-4v4h-4v-4h-4v-4h4z" fill="#fff" stroke="#555"/>
</g>
<text x="1657" y="1075.500" fill="#222" textLength="28" lengthAdjust="spacingAndGlyphs">MODEL</text>
<rect x="1688" y="1064" width="16" height="15" fill="#b4b4b4"/><rect x="1705" y="1064" width="16" height="15" fill="#b4b4b4"/>
<path d="M1691 1067h10v9h-10zM1692 1070l5 5" fill="none" stroke="#234"/>
<path d="M1707 1067h5v6h-5zM1714 1067h5v6h-5zM1707 1076h12" fill="none" stroke="#234"/>
<rect x="1730" y="1064" width="38" height="15" fill="#8a8a8a"/>
<path d="M1737 1066l2 6 5 4h-14l5-4z" fill="#eee" stroke="#333"/>
<text x="1746" y="1075.500" fill="#222" style="font-size:11px">1:1</text>
<path d="M1757 1069h6l-3 3z" fill="#222"/>
<rect x="1769" y="1064" width="15" height="15" fill="#a8a8a8"/><rect x="1785" y="1064" width="15" height="15" fill="#8f8f8f"/>
<path d="M1772 1076l4-9 2 8z" fill="#eee" stroke="#333"/><circle cx="1780" cy="1072" r="2.500" fill="#eaa820"/>
<path d="M1792 1067l3 8h-6zM1788 1076l4-3 4 3" fill="none" stroke="#aaa"/>
<rect x="1806" y="1064" width="62" height="15" fill="#a0a0a0"/>
<circle cx="1813" cy="1071.500" r="5" fill="none" stroke="#333" stroke-dasharray="2 1" stroke-width="1.500"/>
<circle cx="1813" cy="1071.500" r="2" fill="none" stroke="#333"/>
<rect x="1824" y="1072" width="7" height="6" fill="#eee" stroke="#333"/><path d="M1827 1072v-3a3 3 0 0 1 6 0" fill="none" stroke="#333"/>
<circle cx="1845" cy="1071" r="4.500" fill="#bbb" stroke="#888"/>
<rect x="1855" y="1064" width="32" height="15" fill="#8f8f8f"/>
<rect x="1858" y="1066" width="11" height="11" fill="#e8a020" stroke="#246"/><path d="M1858 1069h10" stroke="#2a70c0" stroke-width="3"/><path d="M1861 1075l3 2 5-5" stroke="#2a9a3a" stroke-width="1.500" fill="none"/>
<circle cx="1880" cy="1070" r="4" fill="#f0dc80" stroke="#a89030"/><rect x="1878" y="1074" width="4" height="3" fill="#888"/>
<rect x="1893" y="1064" width="8" height="15" fill="#9a9a9a"/><path d="M1895 1071h4v3h-4z" fill="#222"/>
<rect x="1904" y="1065" width="13" height="13" fill="#e0e0e0" stroke="#555"/><rect x="1906" y="1067" width="9" height="2" fill="#888"/>
</svg>
</body></html>
